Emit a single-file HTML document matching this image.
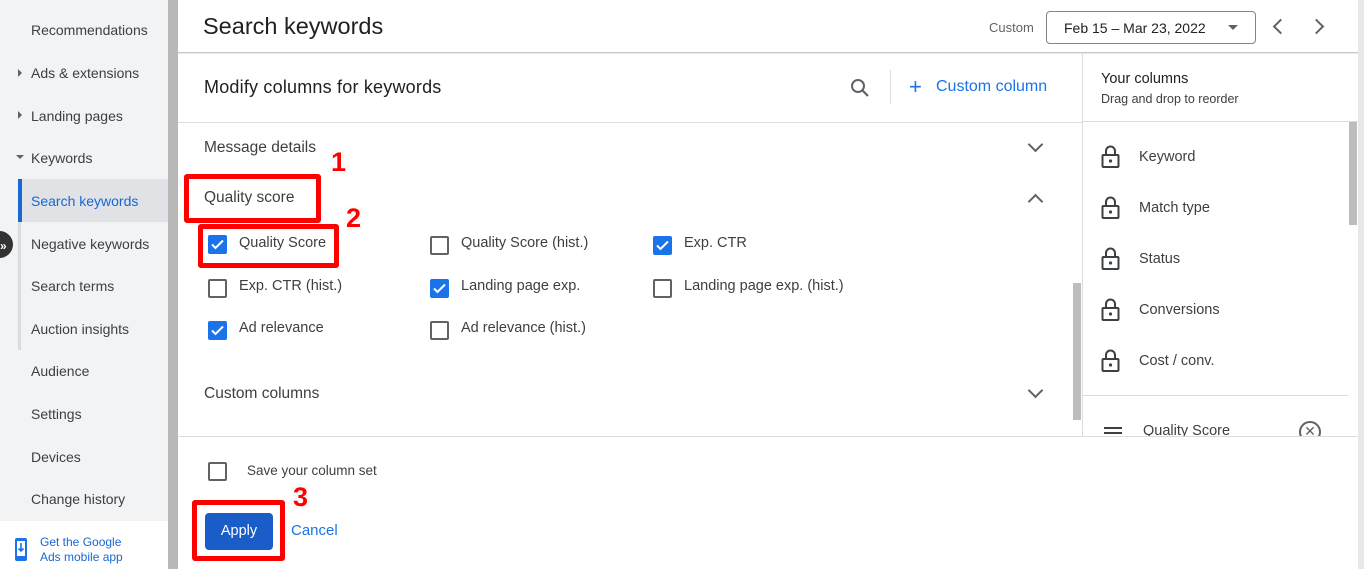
<!DOCTYPE html>
<html><head><style>
*{box-sizing:border-box;margin:0;padding:0}
body{width:1364px;height:569px;overflow:hidden;background:#e8e8e8;font-family:"Liberation Sans",Arial,sans-serif;position:relative;color:#3c4043}
.a{position:absolute}
.side{left:0;top:0;width:168px;height:569px;background:#f1f3f4}
.nav{position:absolute;left:31px;font-size:14px;color:#3c4043}
.tri{position:absolute;left:18px;width:0;height:0}
.cb{position:absolute;width:19px;height:19px;border:2px solid #5f6368;border-radius:2px;background:#fff}
.cbx{position:absolute;width:19px;height:19px;border-radius:2px;background:#1a73e8}
.lbl{position:absolute;font-size:14.5px;color:#3c4043}
.red{position:absolute;border:5px solid #f00;border-radius:3px}
.num{position:absolute;font-size:27px;font-weight:bold;color:#f00;text-shadow:-2px 0 #fff,2px 0 #fff,0 -2px #fff,0 2px #fff,0 0 3px #888}
.lock{position:absolute;left:1101px}
.col{position:absolute;left:1139px;font-size:14.5px;color:#3c4043}
.chev{position:absolute;width:11px;height:11px;border-right:2px solid #5f6368;border-bottom:2px solid #5f6368}
</style></head><body>
<div class="a side"></div>
<div class="nav" style="top:22px">Recommendations</div>
<div class="tri" style="top:69px;border-left:4px solid #5f6368;border-top:4px solid transparent;border-bottom:4px solid transparent"></div>
<div class="nav" style="top:65px">Ads &amp; extensions</div>
<div class="tri" style="top:111px;border-left:4px solid #5f6368;border-top:4px solid transparent;border-bottom:4px solid transparent"></div>
<div class="nav" style="top:108px">Landing pages</div>
<div class="tri" style="top:155px;left:16px;border-top:4px solid #5f6368;border-left:4px solid transparent;border-right:4px solid transparent"></div>
<div class="nav" style="top:150px">Keywords</div>
<div class="a" style="left:18px;top:179px;width:150px;height:43px;background:#e0e2e5"></div>
<div class="a" style="left:18px;top:179px;width:4px;height:43px;background:#1967d2"></div>
<div class="a" style="left:18px;top:222px;width:3px;height:128px;background:#dadce0"></div>
<div class="nav" style="top:193px;color:#1967d2">Search keywords</div>
<div class="nav" style="top:236px">Negative keywords</div>
<div class="nav" style="top:278px">Search terms</div>
<div class="nav" style="top:321px">Auction insights</div>
<div class="nav" style="top:363px">Audience</div>
<div class="nav" style="top:406px">Settings</div>
<div class="nav" style="top:449px">Devices</div>
<div class="nav" style="top:491px">Change history</div>
<div class="a" style="left:0;top:521px;width:168px;height:48px;background:#fff"></div>
<svg class="a" style="left:14px;top:537px" width="14" height="25"><rect x="1" y="1" width="12" height="23" rx="2" fill="#1a73e8"/><rect x="3" y="4" width="8" height="15" fill="#fff"/><path d="M7 6v8M4.5 11.5L7 14l2.5-2.5" stroke="#1a73e8" stroke-width="1.6" fill="none"/></svg>
<div class="a" style="left:40px;top:535px;font-size:12px;line-height:15px;color:#1967d2">Get the Google<br>Ads mobile app</div>
<div class="a" style="left:-14px;top:231px;width:27px;height:27px;border-radius:50%;background:#333"></div>
<div class="a" style="left:0;top:239px;color:#fff;font-size:12px;font-weight:bold">»</div>
<div class="a" style="left:168px;top:0;width:10px;height:569px;background:#b8b8b8"></div>
<div class="a" style="left:178px;top:0;width:1180px;height:53px;background:#fff;border-bottom:1px solid #c8c8c8"></div>
<div class="a" style="left:203px;top:13px;font-size:23.5px;color:#202124">Search keywords</div>
<div class="a" style="left:989px;top:20px;font-size:13px;color:#5f6368">Custom</div>
<div class="a" style="left:1046px;top:11px;width:210px;height:33px;border:1px solid #80868b;border-radius:4px"></div>
<div class="a" style="left:1064px;top:20px;font-size:14px;color:#202124">Feb 15 – Mar 23, 2022</div>
<div class="a" style="left:1228px;top:25px;border-top:5px solid #5f6368;border-left:5px solid transparent;border-right:5px solid transparent"></div>
<div class="chev" style="left:1275px;top:21px;transform:rotate(135deg)"></div>
<div class="chev" style="left:1311px;top:21px;transform:rotate(-45deg)"></div>
<div class="a" style="left:178px;top:54px;width:1180px;height:515px;background:#fff"></div>
<div class="a" style="left:178px;top:122px;width:905px;height:1px;background:#dadce0"></div>
<div class="a" style="left:1082px;top:54px;width:1px;height:383px;background:#dadce0"></div>
<div class="a" style="left:1083px;top:121px;width:275px;height:1px;background:#dadce0"></div>
<div class="a" style="left:178px;top:436px;width:1180px;height:1px;background:#dadce0"></div>
<div class="a" style="left:204px;top:77px;font-size:18px;letter-spacing:0.2px;color:#202124">Modify columns for keywords</div>
<svg class="a" style="left:850px;top:78px" width="20" height="20"><circle cx="8" cy="8" r="6" stroke="#5f6368" stroke-width="2" fill="none"/><path d="M12.5 12.5L18 18" stroke="#5f6368" stroke-width="2.2"/></svg>
<div class="a" style="left:890px;top:70px;width:1px;height:34px;background:#dadce0"></div>
<div class="a" style="left:909px;top:74px;font-size:22px;color:#1a73e8">+</div>
<div class="a" style="left:936px;top:78px;font-size:16px;color:#1a73e8">Custom column</div>
<div class="a" style="left:204px;top:139px;font-size:15.5px">Message details</div>
<div class="chev" style="left:1030px;top:139px;transform:rotate(45deg)"></div>
<div class="a" style="left:204px;top:189px;font-size:15.5px">Quality score</div>
<div class="chev" style="left:1030px;top:196px;transform:rotate(-135deg)"></div>
<div class="cbx" style="left:208px;top:235px"></div><svg class="a" style="left:208px;top:235px" width="19" height="19"><path d="M4 9.5l3.5 3.5 7.5-7.5" stroke="#fff" stroke-width="2" fill="none"/></svg>
<div class="lbl" style="left:239px;top:235px">Quality Score</div>
<div class="cb" style="left:430px;top:236px"></div><div class="lbl" style="left:461px;top:235px">Quality Score (hist.)</div>
<div class="cbx" style="left:653px;top:236px"></div><svg class="a" style="left:653px;top:236px" width="19" height="19"><path d="M4 9.5l3.5 3.5 7.5-7.5" stroke="#fff" stroke-width="2" fill="none"/></svg>
<div class="lbl" style="left:684px;top:235px">Exp. CTR</div>
<div class="cb" style="left:208px;top:279px"></div><div class="lbl" style="left:239px;top:278px">Exp. CTR (hist.)</div>
<div class="cbx" style="left:430px;top:279px"></div><svg class="a" style="left:430px;top:279px" width="19" height="19"><path d="M4 9.5l3.5 3.5 7.5-7.5" stroke="#fff" stroke-width="2" fill="none"/></svg>
<div class="lbl" style="left:461px;top:278px">Landing page exp.</div>
<div class="cb" style="left:653px;top:279px"></div><div class="lbl" style="left:684px;top:278px">Landing page exp. (hist.)</div>
<div class="cbx" style="left:208px;top:321px"></div><svg class="a" style="left:208px;top:321px" width="19" height="19"><path d="M4 9.5l3.5 3.5 7.5-7.5" stroke="#fff" stroke-width="2" fill="none"/></svg>
<div class="lbl" style="left:239px;top:320px">Ad relevance</div>
<div class="cb" style="left:430px;top:321px"></div><div class="lbl" style="left:461px;top:320px">Ad relevance (hist.)</div>
<div class="a" style="left:204px;top:385px;font-size:15.5px">Custom columns</div>
<div class="chev" style="left:1030px;top:385px;transform:rotate(45deg)"></div>
<div class="a" style="left:1073px;top:283px;width:8px;height:137px;background:#bdbdbd"></div>
<div class="a" style="left:1101px;top:71px;font-size:14.5px;color:#202124">Your columns</div>
<div class="a" style="left:1101px;top:92px;font-size:12.5px;color:#3c4043">Drag and drop to reorder</div>
<div class="a" style="left:1349px;top:122px;width:8px;height:103px;background:#bdbdbd"></div>
<svg class="lock" style="top:145px" width="19" height="24"><path d="M5 10V6a4.5 4.5 0 0 1 9 0v4" stroke="#3c4043" stroke-width="2" fill="none"/><rect x="1.5" y="10" width="16" height="12" rx="1" stroke="#3c4043" stroke-width="2" fill="none"/><circle cx="9.5" cy="16" r="1.6" fill="#3c4043"/></svg>
<div class="col" style="top:149px">Keyword</div>
<svg class="lock" style="top:196px" width="19" height="24"><path d="M5 10V6a4.5 4.5 0 0 1 9 0v4" stroke="#3c4043" stroke-width="2" fill="none"/><rect x="1.5" y="10" width="16" height="12" rx="1" stroke="#3c4043" stroke-width="2" fill="none"/><circle cx="9.5" cy="16" r="1.6" fill="#3c4043"/></svg>
<div class="col" style="top:200px">Match type</div>
<svg class="lock" style="top:247px" width="19" height="24"><path d="M5 10V6a4.5 4.5 0 0 1 9 0v4" stroke="#3c4043" stroke-width="2" fill="none"/><rect x="1.5" y="10" width="16" height="12" rx="1" stroke="#3c4043" stroke-width="2" fill="none"/><circle cx="9.5" cy="16" r="1.6" fill="#3c4043"/></svg>
<div class="col" style="top:251px">Status</div>
<svg class="lock" style="top:298px" width="19" height="24"><path d="M5 10V6a4.5 4.5 0 0 1 9 0v4" stroke="#3c4043" stroke-width="2" fill="none"/><rect x="1.5" y="10" width="16" height="12" rx="1" stroke="#3c4043" stroke-width="2" fill="none"/><circle cx="9.5" cy="16" r="1.6" fill="#3c4043"/></svg>
<div class="col" style="top:302px">Conversions</div>
<svg class="lock" style="top:349px" width="19" height="24"><path d="M5 10V6a4.5 4.5 0 0 1 9 0v4" stroke="#3c4043" stroke-width="2" fill="none"/><rect x="1.5" y="10" width="16" height="12" rx="1" stroke="#3c4043" stroke-width="2" fill="none"/><circle cx="9.5" cy="16" r="1.6" fill="#3c4043"/></svg>
<div class="col" style="top:353px">Cost / conv.</div>
<div class="a" style="left:1083px;top:395px;width:265px;height:1px;background:#dadce0"></div>
<div class="a" style="left:1104px;top:427px;width:18px;height:2px;background:#3c4043"></div>
<div class="a" style="left:1104px;top:432px;width:18px;height:2px;background:#3c4043"></div>
<div class="a" style="left:1143px;top:423px;font-size:14.5px;height:13px;overflow:hidden">Quality Score</div>
<div class="a" style="left:1299px;top:421px;width:22px;height:15px;overflow:hidden"><div style="width:22px;height:22px;border:2px solid #5f6368;border-radius:50%;text-align:center;font-size:14px;line-height:17px;color:#5f6368">✕</div></div>
<div class="cb" style="left:208px;top:462px"></div>
<div class="lbl" style="left:247px;top:463px;font-size:13.5px">Save your column set</div>
<div class="a" style="left:205px;top:513px;width:68px;height:37px;background:#1a5dc8;border-radius:4px;color:#fff;font-size:14.5px;text-align:center;line-height:37px">Apply</div>
<div class="a" style="left:291px;top:522px;font-size:15px;color:#1a73e8">Cancel</div>
<div class="red" style="left:184px;top:174px;width:137px;height:49px"></div>
<div class="red" style="left:198px;top:224px;width:141px;height:44px"></div>
<div class="red" style="left:192px;top:500px;width:93px;height:61px"></div>
<div class="num" style="left:331px;top:147px">1</div>
<div class="num" style="left:346px;top:203px">2</div>
<div class="num" style="left:293px;top:482px">3</div>
</body></html>
